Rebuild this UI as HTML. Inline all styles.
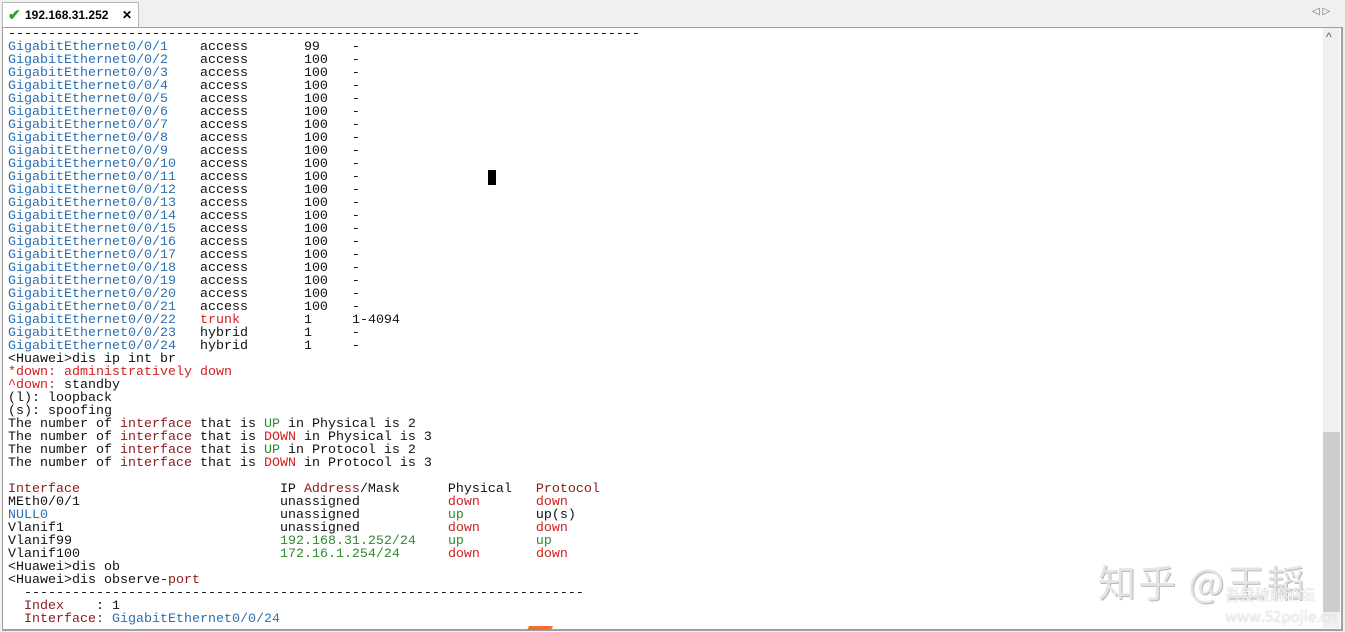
<!DOCTYPE html><html><head><meta charset="utf-8"><style>
body{margin:0;width:1345px;height:632px;background:#f0f0f0;overflow:hidden;position:relative;font-family:"Liberation Sans",sans-serif}
.tab{position:absolute;left:2px;top:2px;width:135px;height:25px;background:#fff;border:1px solid #b8b8b8;border-bottom:none;font-size:12px;font-weight:bold}
.term{position:absolute;left:2px;top:27px;width:1338px;height:601px;background:#fff;border:1px solid #a0a0a0;border-right:2px solid #a0a0a0;border-bottom:2px solid #a0a0a0}
pre{position:absolute;left:8px;top:28px;margin:0;font-family:"Liberation Mono",monospace;font-size:13.33px;line-height:13px;color:#111}
.b{color:#2a6fb0}.r{color:#d42020}.d{color:#8b1a1a}.g{color:#2e8b2e}
.sb{position:absolute;left:1323px;top:28px;width:17px;height:600px;background:#f0f0f0}
.th{position:absolute;left:1323px;top:432px;width:17px;height:180px;background:#cdcdcd}
.wm{position:absolute;left:1098px;top:553px;font-family:"Noto Sans CJK SC",sans-serif;font-size:38px;color:#e4e4e4;text-shadow:1px 1px 0 #b8b8b8;letter-spacing:2px}
.wm2{position:absolute;left:1225px;top:584px;font-family:"Noto Sans CJK SC",sans-serif;font-size:15px;line-height:22px;color:#f4f4f4;text-shadow:0 0 1px #aaa}
</style></head><body>
<div class="tab"><span style="position:absolute;left:5px;top:3px;color:#2aa02a;font-size:15px">✔</span><span style="position:absolute;left:22px;top:5px">192.168.31.252</span><span style="position:absolute;left:119px;top:5px;font-size:12px">✕</span></div>
<div style="position:absolute;left:1312px;top:6px;font-size:10px;color:#666">◁ ▷</div>
<div class="term"></div>
<div class="sb"></div><div class="th"></div>
<div style="position:absolute;left:1326px;top:30px;font-size:12px;color:#555">^</div>
<pre>-------------------------------------------------------------------------------
<span class="b">GigabitEthernet0/0/1</span>    access       99    -
<span class="b">GigabitEthernet0/0/2</span>    access       100   -
<span class="b">GigabitEthernet0/0/3</span>    access       100   -
<span class="b">GigabitEthernet0/0/4</span>    access       100   -
<span class="b">GigabitEthernet0/0/5</span>    access       100   -
<span class="b">GigabitEthernet0/0/6</span>    access       100   -
<span class="b">GigabitEthernet0/0/7</span>    access       100   -
<span class="b">GigabitEthernet0/0/8</span>    access       100   -
<span class="b">GigabitEthernet0/0/9</span>    access       100   -
<span class="b">GigabitEthernet0/0/10</span>   access       100   -
<span class="b">GigabitEthernet0/0/11</span>   access       100   -                <span style="background:#000">&nbsp;</span>
<span class="b">GigabitEthernet0/0/12</span>   access       100   -
<span class="b">GigabitEthernet0/0/13</span>   access       100   -
<span class="b">GigabitEthernet0/0/14</span>   access       100   -
<span class="b">GigabitEthernet0/0/15</span>   access       100   -
<span class="b">GigabitEthernet0/0/16</span>   access       100   -
<span class="b">GigabitEthernet0/0/17</span>   access       100   -
<span class="b">GigabitEthernet0/0/18</span>   access       100   -
<span class="b">GigabitEthernet0/0/19</span>   access       100   -
<span class="b">GigabitEthernet0/0/20</span>   access       100   -
<span class="b">GigabitEthernet0/0/21</span>   access       100   -
<span class="b">GigabitEthernet0/0/22</span>   <span class="r">trunk</span>        1     1-4094
<span class="b">GigabitEthernet0/0/23</span>   hybrid       1     -
<span class="b">GigabitEthernet0/0/24</span>   hybrid       1     -
&lt;Huawei&gt;dis ip int br
<span class="r">*down: administratively down</span>
<span class="r">^down:</span> standby
(l): loopback
(s): spoofing
The number of <span class="d">interface</span> that is <span class="g">UP</span> in Physical is 2
The number of <span class="d">interface</span> that is <span class="r">DOWN</span> in Physical is 3
The number of <span class="d">interface</span> that is <span class="g">UP</span> in Protocol is 2
The number of <span class="d">interface</span> that is <span class="r">DOWN</span> in Protocol is 3

<span class="d">Interface</span>                         IP <span class="d">Address</span>/Mask      Physical   <span class="d">Protocol</span>
MEth0/0/1                         unassigned           <span class="r">down</span>       <span class="r">down</span>
<span class="b">NULL0</span>                             unassigned           <span class="g">up</span>         up(s)
Vlanif1                           unassigned           <span class="r">down</span>       <span class="r">down</span>
Vlanif99                          <span class="g">192.168.31.252/24</span>    <span class="g">up</span>         <span class="g">up</span>
Vlanif100                         <span class="g">172.16.1.254/24</span>      <span class="r">down</span>       <span class="r">down</span>
&lt;Huawei&gt;dis ob
&lt;Huawei&gt;dis observe-<span class="d">port</span>
  ----------------------------------------------------------------------
  <span class="d">Index</span>    : 1
  <span class="d">Interface:</span> <span class="b">GigabitEthernet0/0/24</span>
</pre>
<div style="position:absolute;left:528px;top:626px;width:24px;height:4px;background:#f07030;transform:skewX(-30deg)"></div>
<div class="wm">知乎 @王韬</div>
<div class="wm2">吾爱破解论坛<br>www.52pojie.cn</div>
</body></html>
